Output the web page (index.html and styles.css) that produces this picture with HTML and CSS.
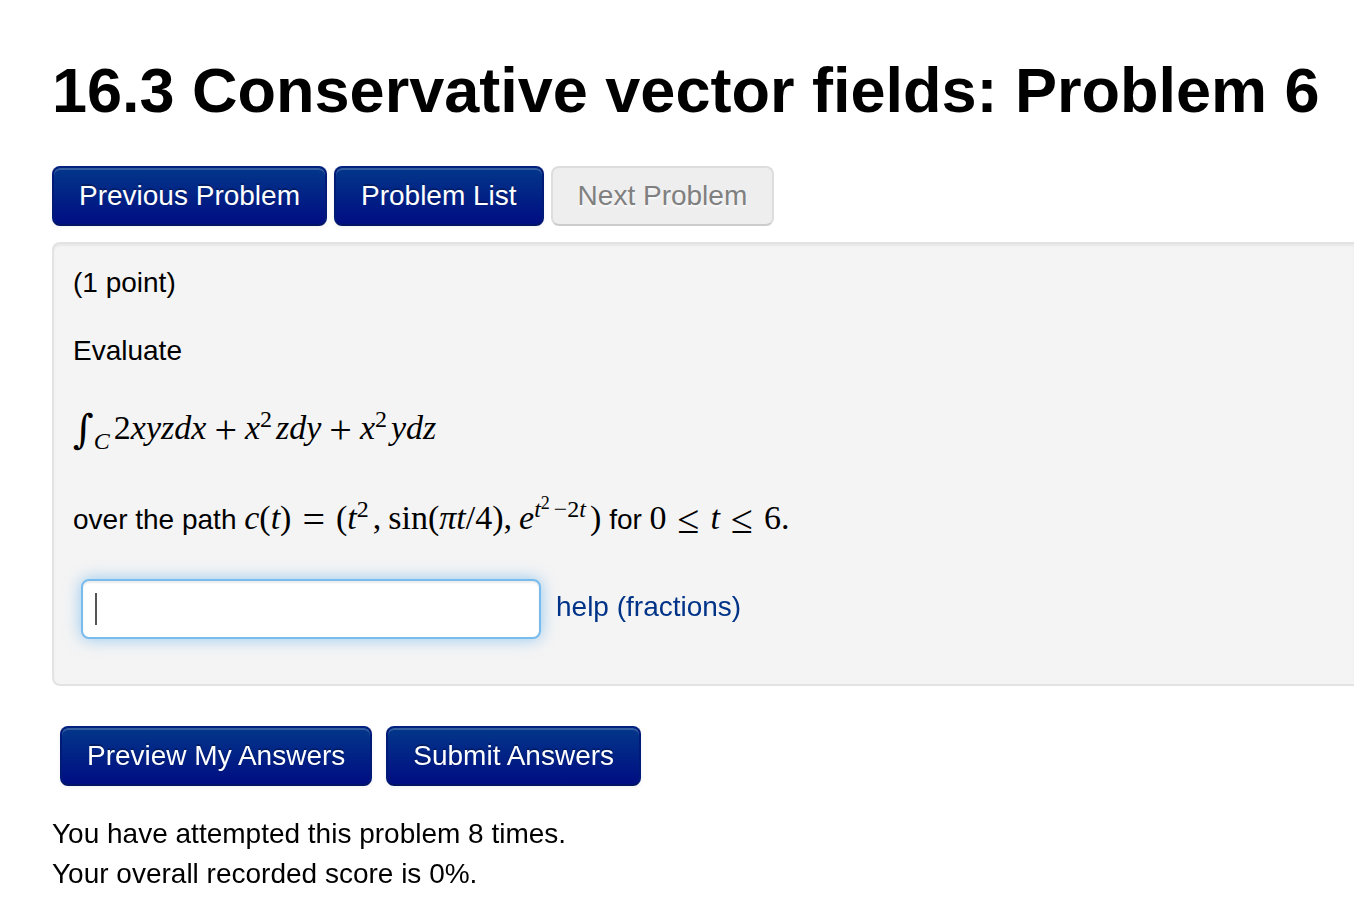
FILE: index.html
```
<!DOCTYPE html>
<html lang="en">
<head>
    <meta charset="UTF-8">
    <meta name="viewport" content="width=device-width, initial-scale=1.0">
    <title>16.3 Conservative vector fields: Problem 6</title>
    <link rel="stylesheet" href="styles.css">
</head>
<body>
    <h1>16.3 Conservative vector fields: Problem 6</h1>

    <!-- Problem navigation -->
    <nav class="problem-nav">
        <a class="btn btn-primary" href="#previous">Previous Problem</a>
        <a class="btn btn-primary" href="#list">Problem List</a>
        <button class="btn" type="button" disabled>Next Problem</button>
    </nav>

    <form id="answers" action="#">
        <!-- Problem text -->
        <div class="problem">
            <p>(1 point)</p>
            <p>Evaluate</p>
            <p class="math-row">
                <span class="math"><span class="integral">∫</span><sub><i>C</i></sub><span class="thin"></span>2<i>xyzdx</i><span class="op">+</span><i>x</i><sup>2</sup><span class="thin"></span><i>zdy</i><span class="op">+</span><i>x</i><sup>2</sup><span class="thin"></span><i>ydz</i></span>
            </p>
            <p class="math-row">over the path <span class="math"><i>c</i>(<i>t</i>)<span class="rel">=</span>(<i>t</i><sup>2</sup><span class="thin"></span>,<span class="space"></span>sin(<i>πt</i>/4),<span class="space"></span><i>e</i><sup><i>t</i><sup>2</sup><span class="thin"></span>−2<i>t</i></sup><span class="thin"></span>)</span> for <span class="math">0<span class="rel">≤</span><i>t</i><span class="rel">≤</span>6.</span></p>
            <div class="answer">
                <input type="text" id="answer" class="answer-input" aria-label="Answer 1" autocomplete="off" autofocus>
                <a class="help" href="#help">help (fractions)</a>
            </div>
        </div>

        <!-- Submit buttons -->
        <div class="submit-buttons">
            <button class="btn btn-primary" type="button">Preview My Answers</button>
            <button class="btn btn-primary" type="submit">Submit Answers</button>
        </div>
    </form>

    <p class="score">You have attempted this problem 8 times.<br>Your overall recorded score is 0%.</p>
</body>
</html>
```
FILE: styles.css
```
/* General body styles */
body {
    margin: 0;
    padding: 50px 0 0 52px;
    background-color: #fff;
    color: #000;
    font-family: "Liberation Sans", Arial, sans-serif;
    font-size: 28px;
    line-height: 40px;
    overflow-x: hidden;
}

h1 {
    margin: 0 0 36px;
    font-size: 63px;
    line-height: 80px;
    white-space: nowrap;
}

p {
    margin: 0;
}

a {
    color: #038;
    text-decoration: none;
}

/* Buttons */
.problem-nav {
    display: flex;
    gap: 7px;
    margin-bottom: 16px;
}

.btn {
    padding: 8px 25px;
    border: 2px solid #ddd;
    border-bottom-color: #ccc;
    border-radius: 8px;
    background-color: #eee;
    color: #808080;
    font: inherit;
    text-shadow: 0 2px 2px rgba(255, 255, 255, 0.75);
}

.btn-primary {
    border-color: #002080 #001a78 #001466;
    background: linear-gradient(to bottom, #03388a, #000c82) border-box;
    color: #fff;
    text-shadow: 0 -2px 0 rgba(0, 0, 0, 0.25);
    box-shadow: inset 0 2px 0 rgba(255, 255, 255, 0.2), 0 2px 4px rgba(0, 0, 0, 0.05);
}

/* Problem box, runs off the right edge of the window */
.problem {
    display: flex;
    flex-direction: column;
    gap: 28px;
    padding: 19px 19px 45px;
    border: 2px solid #e3e3e3;
    border-right: 0;
    border-radius: 8px 0 0 8px;
    background-color: #f4f4f4;
    box-shadow: inset 0 2px 2px rgba(0, 0, 0, 0.05);
}

/* Math */
.math-row {
    line-height: 62px;
    white-space: nowrap;
}

.math {
    font-family: "Liberation Serif", "Times New Roman", serif;
    font-size: 34px;
    line-height: 0;
}

.math sup,
.math sub {
    font-size: 24px;
}

.math sup {
    vertical-align: 12px;
}

.math sub {
    vertical-align: -10px;
}

.math sup sup {
    font-size: 18px;
    vertical-align: 8px;
}

.integral {
    font-family: "DejaVu Serif", serif;
    font-size: 40px;
    font-style: italic;
    vertical-align: -4px;
}

.thin {
    margin-left: 4px;
}

.space {
    margin-left: 7px;
}

.op,
.rel {
    margin: 0 8px;
    font-size: 40px;
    vertical-align: -4px;
}

.rel {
    margin: 0 11px;
}

/* Answer box */
.answer {
    display: flex;
    align-items: center;
    gap: 15px;
    padding-left: 8px;
}

.answer-input {
    box-sizing: border-box;
    width: 460px;
    height: 60px;
    padding: 8px 12px;
    border: 2px solid #ccc;
    border-radius: 8px;
    background-color: #fff;
    color: #555;
    font: inherit;
}

/* Focused box has a blue glow and a wide caret */
.answer-input:focus {
    border-color: #78bbed;
    outline: 0;
    background-image: linear-gradient(#555, #555);
    background-position: 12px center;
    background-repeat: no-repeat;
    background-size: 2px 32px;
    caret-color: transparent;
    box-shadow: inset 0 2px 2px rgba(0, 0, 0, 0.08), 0 0 16px rgba(82, 168, 236, 0.6);
}

.help {
    padding-bottom: 4px;
}

.submit-buttons {
    display: flex;
    gap: 14px;
    padding: 40px 0 28px 8px;
}
```
